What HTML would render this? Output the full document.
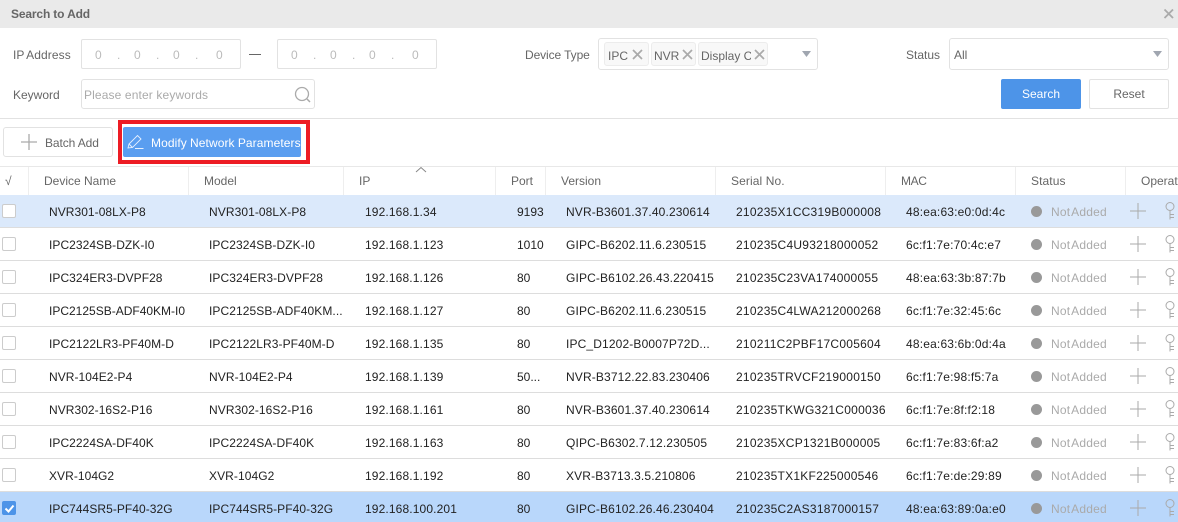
<!DOCTYPE html>
<html><head><meta charset="utf-8"><style>
html,body{margin:0;padding:0;background:#fff}
body{width:1178px;height:522px;overflow:hidden;position:relative;font:12px/14px "Liberation Sans",Arial,sans-serif;color:#666}
.a{position:absolute;white-space:nowrap}
.b{position:absolute;box-sizing:border-box;border:1px solid #e2e2e2;border-radius:2px;background:#fff}
.ip{color:#bbb}
.tag{position:absolute;top:42px;height:24px;box-sizing:border-box;background:#f8f8f8;border:1px solid #ececec;border-radius:3px;color:#666}
.sep{position:absolute;top:167px;width:1px;height:28px;background:#eee}
.r{position:absolute;left:0;width:1178px;height:33px;box-sizing:border-box;border-bottom:1px solid #ddd}
.r span{position:absolute;top:10px;white-space:nowrap;color:#222}
.r span.n{color:#aaa;left:1051px;word-spacing:-2px;letter-spacing:.2px}
.r i{position:absolute;left:1031px;top:11px;width:11px;height:11px;border-radius:50%;background:#999}
.r b{position:absolute;left:2px;top:9px;width:14px;height:14px;box-sizing:border-box;border:1px solid #ccc;border-radius:2px;background:#fff}
.r svg{position:absolute;left:1128px;top:6px}
.c1{left:49px;letter-spacing:.05px}.c2{left:209px;letter-spacing:.08px}.c3{left:365px;letter-spacing:.13px}.c4{left:517px}.c5{left:566px;letter-spacing:.14px}.c6{left:736px;letter-spacing:.25px}.c7{left:906px;letter-spacing:.18px}
</style></head><body>
<div class="a" style="left:0;top:0;width:1178px;height:28px;background:#eaeaea"></div>
<div class="a" style="left:11px;top:7px;font-weight:bold;color:#666;letter-spacing:-.15px">Search to Add</div>
<svg class="a" style="left:1163px;top:8px" width="12" height="12"><path d="M1.500 1.500L10 10M10 1.500L1.500 10" stroke="#aaa" stroke-width="1.800"/></svg>

<div class="a" style="left:13px;top:48px;word-spacing:-1px;letter-spacing:.1px">IP Address</div>
<div class="b" style="left:81px;top:39px;width:160px;height:30px"></div>
<div class="a ip" style="left:95px;top:48px">0</div><div class="a ip" style="left:117px;top:48px">.</div><div class="a ip" style="left:134px;top:48px">0</div><div class="a ip" style="left:156px;top:48px">.</div><div class="a ip" style="left:173px;top:48px">0</div><div class="a ip" style="left:195px;top:48px">.</div><div class="a ip" style="left:216px;top:48px">0</div>
<div class="a" style="left:249px;top:54px;width:12px;height:1px;background:#666"></div>
<div class="b" style="left:277px;top:39px;width:160px;height:30px"></div>
<div class="a ip" style="left:291px;top:48px">0</div><div class="a ip" style="left:313px;top:48px">.</div><div class="a ip" style="left:330px;top:48px">0</div><div class="a ip" style="left:352px;top:48px">.</div><div class="a ip" style="left:369px;top:48px">0</div><div class="a ip" style="left:391px;top:48px">.</div><div class="a ip" style="left:412px;top:48px">0</div>

<div class="a" style="left:13px;top:88px">Keyword</div>
<div class="b" style="left:81px;top:79px;width:234px;height:30px;border-radius:3px"></div>
<div class="a" style="left:84px;top:88px;color:#aaa;letter-spacing:.13px">Please enter keywords</div>
<svg class="a" style="left:294px;top:86px" width="18" height="18" fill="none" stroke="#aaa"><circle cx="8" cy="8" r="6.500" stroke-width="1.300"/><path d="M13 13L16 16" stroke-width="1.500"/></svg>

<div class="a" style="left:525px;top:48px;letter-spacing:-.1px">Device Type</div>
<div class="b" style="left:598px;top:38px;width:220px;height:32px;border-radius:3px"></div>
<div class="tag" style="left:604px;width:45px"></div>
<div class="a" style="left:608px;top:49px">IPC</div>
<svg class="a" style="left:632px;top:49px" width="11" height="11"><path d="M1 1L10 10M10 1L1 10" stroke="#aaa" stroke-width="1.700"/></svg>
<div class="tag" style="left:651px;width:45px"></div>
<div class="a" style="left:654px;top:49px">NVR</div>
<svg class="a" style="left:682px;top:49px" width="11" height="11"><path d="M1 1L10 10M10 1L1 10" stroke="#aaa" stroke-width="1.700"/></svg>
<div class="tag" style="left:698px;width:70px"></div>
<div class="a" style="left:701px;top:49px;width:50px;overflow:hidden">Display Channel</div>
<svg class="a" style="left:754px;top:49px" width="11" height="11"><path d="M1 1L10 10M10 1L1 10" stroke="#aaa" stroke-width="1.700"/></svg>
<svg class="a" style="left:802px;top:51px" width="9" height="6"><path d="M0 0H9L4.500 6Z" fill="#a0a6b0"/></svg>

<div class="a" style="left:906px;top:48px">Status</div>
<div class="b" style="left:949px;top:38px;width:220px;height:32px;border-radius:3px"></div>
<div class="a" style="left:954px;top:48px">All</div>
<svg class="a" style="left:1153px;top:51px" width="9" height="6"><path d="M0 0H9L4.500 6Z" fill="#a0a6b0"/></svg>
<div class="a" style="left:1001px;top:79px;width:80px;height:30px;background:#4d94e8;border-radius:2px;color:#fff;text-align:center;line-height:31px">Search</div>
<div class="b" style="left:1089px;top:79px;width:80px;height:30px;text-align:center;line-height:29px">Reset</div>

<div class="a" style="left:0;top:118px;width:1178px;height:1px;background:#e2e2e2"></div>

<div class="b" style="left:3px;top:127px;width:110px;height:30px;border-radius:3px"></div>
<svg class="a" style="left:21px;top:134px" width="16" height="16"><path d="M8 0V16M0 8H16" stroke="#aaa" stroke-width="1.300"/></svg>
<div class="a" style="left:45px;top:136px;letter-spacing:-.1px">Batch Add</div>
<div class="a" style="left:118px;top:120px;width:192px;height:44px;box-sizing:border-box;border:4.500px solid #ed1c24;background:#fff"></div>
<div class="a" style="left:123px;top:127px;width:178px;height:30px;background:#5a9ef0;border-radius:2px"></div>
<svg class="a" style="left:127px;top:134px" width="18" height="16" fill="none" stroke="#e6f0ff" stroke-width=".9"><path d="M1 14L2 10L10.500 1.500L14 5L5.500 13.500ZM2 10L5.500 13.500M8 14.500H16.500"/></svg>
<div class="a" style="left:151px;top:136px;color:#fff;letter-spacing:.08px;word-spacing:-.2px">Modify Network Parameters</div>

<div class="a" style="left:0;top:166px;width:1178px;height:1px;background:#e8e8e8"></div>
<div class="sep" style="left:28px"></div><div class="sep" style="left:188px"></div><div class="sep" style="left:343px"></div><div class="sep" style="left:495px"></div><div class="sep" style="left:545px"></div><div class="sep" style="left:715px"></div><div class="sep" style="left:885px"></div><div class="sep" style="left:1015px"></div><div class="sep" style="left:1125px"></div>
<div class="a" style="left:5px;top:174px">√</div>
<div class="a" style="left:44px;top:174px">Device Name</div>
<div class="a" style="left:204px;top:174px">Model</div>
<div class="a" style="left:359px;top:174px">IP</div>
<svg class="a" style="left:415px;top:166px" width="12" height="7" fill="none"><path d="M1 6L6 1.500L11 6" stroke="#888"/></svg>
<div class="a" style="left:511px;top:174px">Port</div>
<div class="a" style="left:561px;top:174px">Version</div>
<div class="a" style="left:731px;top:174px;letter-spacing:.1px">Serial No.</div>
<div class="a" style="left:901px;top:174px;letter-spacing:-.4px">MAC</div>
<div class="a" style="left:1031px;top:174px;letter-spacing:.1px">Status</div>
<div class="a" style="left:1141px;top:174px">Operat</div>

<div class="r" style="top:195px;background:#dbe9fb"><b></b><span class="c1">NVR301-08LX-P8</span><span class="c2">NVR301-08LX-P8</span><span class="c3">192.168.1.34</span><span class="c4">9193</span><span class="c5">NVR-B3601.37.40.230614</span><span class="c6">210235X1CC319B000008</span><span class="c7">48:ea:63:e0:0d:4c</span><i></i><span class="n">Not Added</span><svg width="50" height="22" fill="none" stroke="#aaa"><path d="M10 2V18M2 10H18"/><circle cx="42" cy="5.500" r="4"/><path d="M42 9.500V18.500M42 13.500H46M42 16.500H46"/></svg></div>
<div class="r" style="top:228px"><b></b><span class="c1">IPC2324SB-DZK-I0</span><span class="c2">IPC2324SB-DZK-I0</span><span class="c3">192.168.1.123</span><span class="c4">1010</span><span class="c5">GIPC-B6202.11.6.230515</span><span class="c6">210235C4U93218000052</span><span class="c7">6c:f1:7e:70:4c:e7</span><i></i><span class="n">Not Added</span><svg width="50" height="22" fill="none" stroke="#aaa"><path d="M10 2V18M2 10H18"/><circle cx="42" cy="5.500" r="4"/><path d="M42 9.500V18.500M42 13.500H46M42 16.500H46"/></svg></div>
<div class="r" style="top:261px"><b></b><span class="c1">IPC324ER3-DVPF28</span><span class="c2">IPC324ER3-DVPF28</span><span class="c3">192.168.1.126</span><span class="c4">80</span><span class="c5">GIPC-B6102.26.43.220415</span><span class="c6">210235C23VA174000055</span><span class="c7">48:ea:63:3b:87:7b</span><i></i><span class="n">Not Added</span><svg width="50" height="22" fill="none" stroke="#aaa"><path d="M10 2V18M2 10H18"/><circle cx="42" cy="5.500" r="4"/><path d="M42 9.500V18.500M42 13.500H46M42 16.500H46"/></svg></div>
<div class="r" style="top:294px"><b></b><span class="c1" style="letter-spacing:0">IPC2125SB-ADF40KM-I0</span><span class="c2">IPC2125SB-ADF40KM...</span><span class="c3">192.168.1.127</span><span class="c4">80</span><span class="c5">GIPC-B6202.11.6.230515</span><span class="c6">210235C4LWA212000268</span><span class="c7">6c:f1:7e:32:45:6c</span><i></i><span class="n">Not Added</span><svg width="50" height="22" fill="none" stroke="#aaa"><path d="M10 2V18M2 10H18"/><circle cx="42" cy="5.500" r="4"/><path d="M42 9.500V18.500M42 13.500H46M42 16.500H46"/></svg></div>
<div class="r" style="top:327px"><b></b><span class="c1">IPC2122LR3-PF40M-D</span><span class="c2">IPC2122LR3-PF40M-D</span><span class="c3">192.168.1.135</span><span class="c4">80</span><span class="c5">IPC_D1202-B0007P72D...</span><span class="c6">210211C2PBF17C005604</span><span class="c7">48:ea:63:6b:0d:4a</span><i></i><span class="n">Not Added</span><svg width="50" height="22" fill="none" stroke="#aaa"><path d="M10 2V18M2 10H18"/><circle cx="42" cy="5.500" r="4"/><path d="M42 9.500V18.500M42 13.500H46M42 16.500H46"/></svg></div>
<div class="r" style="top:360px"><b></b><span class="c1">NVR-104E2-P4</span><span class="c2">NVR-104E2-P4</span><span class="c3">192.168.1.139</span><span class="c4">50...</span><span class="c5">NVR-B3712.22.83.230406</span><span class="c6">210235TRVCF219000150</span><span class="c7">6c:f1:7e:98:f5:7a</span><i></i><span class="n">Not Added</span><svg width="50" height="22" fill="none" stroke="#aaa"><path d="M10 2V18M2 10H18"/><circle cx="42" cy="5.500" r="4"/><path d="M42 9.500V18.500M42 13.500H46M42 16.500H46"/></svg></div>
<div class="r" style="top:393px"><b></b><span class="c1">NVR302-16S2-P16</span><span class="c2">NVR302-16S2-P16</span><span class="c3">192.168.1.161</span><span class="c4">80</span><span class="c5">NVR-B3601.37.40.230614</span><span class="c6">210235TKWG321C000036</span><span class="c7">6c:f1:7e:8f:f2:18</span><i></i><span class="n">Not Added</span><svg width="50" height="22" fill="none" stroke="#aaa"><path d="M10 2V18M2 10H18"/><circle cx="42" cy="5.500" r="4"/><path d="M42 9.500V18.500M42 13.500H46M42 16.500H46"/></svg></div>
<div class="r" style="top:426px"><b></b><span class="c1">IPC2224SA-DF40K</span><span class="c2">IPC2224SA-DF40K</span><span class="c3">192.168.1.163</span><span class="c4">80</span><span class="c5">QIPC-B6302.7.12.230505</span><span class="c6">210235XCP1321B000005</span><span class="c7">6c:f1:7e:83:6f:a2</span><i></i><span class="n">Not Added</span><svg width="50" height="22" fill="none" stroke="#aaa"><path d="M10 2V18M2 10H18"/><circle cx="42" cy="5.500" r="4"/><path d="M42 9.500V18.500M42 13.500H46M42 16.500H46"/></svg></div>
<div class="r" style="top:459px"><b></b><span class="c1">XVR-104G2</span><span class="c2">XVR-104G2</span><span class="c3">192.168.1.192</span><span class="c4">80</span><span class="c5">XVR-B3713.3.5.210806</span><span class="c6">210235TX1KF225000546</span><span class="c7">6c:f1:7e:de:29:89</span><i></i><span class="n">Not Added</span><svg width="50" height="22" fill="none" stroke="#aaa"><path d="M10 2V18M2 10H18"/><circle cx="42" cy="5.500" r="4"/><path d="M42 9.500V18.500M42 13.500H46M42 16.500H46"/></svg></div>
<div class="r" style="top:492px;height:30px;background:#b9d7fb;border-bottom:0"><b style="background:#4d94e8;border-color:#4d94e8"><svg style="left:1px;top:2px" width="11" height="9" fill="none"><path d="M1.500 4.500L4.500 7.500L9.500 1.500" stroke="#fff" stroke-width="2"/></svg></b><span class="c1">IPC744SR5-PF40-32G</span><span class="c2">IPC744SR5-PF40-32G</span><span class="c3">192.168.100.201</span><span class="c4">80</span><span class="c5">GIPC-B6102.26.46.230404</span><span class="c6">210235C2AS3187000157</span><span class="c7">48:ea:63:89:0a:e0</span><i></i><span class="n">Not Added</span><svg width="50" height="22" fill="none" stroke="#aaa"><path d="M10 2V18M2 10H18"/><circle cx="42" cy="5.500" r="4"/><path d="M42 9.500V18.500M42 13.500H46M42 16.500H46"/></svg></div>
</body></html>
